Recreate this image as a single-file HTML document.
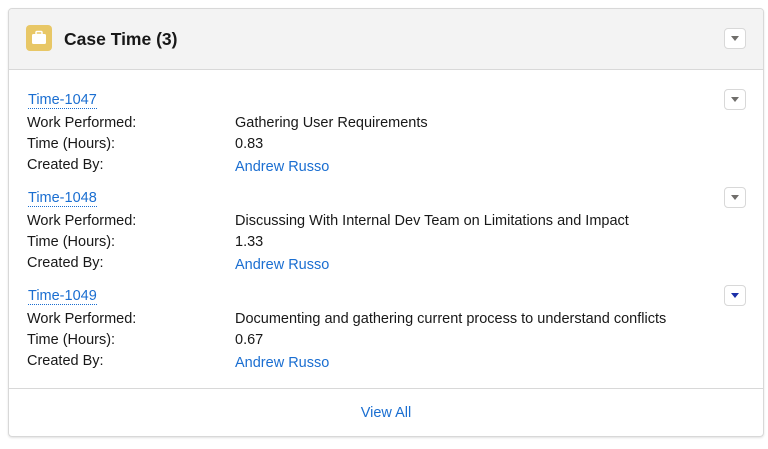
<!DOCTYPE html>
<html><head><style>
*{margin:0;padding:0;box-sizing:border-box}
body{width:768px;height:449px;background:#fff;font-family:"Liberation Sans",sans-serif;position:relative;overflow:hidden}
.card{position:absolute;left:8px;top:8px;width:756px;height:429px;border:1px solid #d8d8d8;border-radius:4px;box-shadow:0 1px 2px rgba(0,0,0,.12);overflow:hidden}
.hdr{position:absolute;left:0;top:0;width:100%;height:61px;background:#f3f3f3;border-bottom:1px solid #d8d8d8}
.icon{position:absolute;left:17px;top:16px;width:26px;height:26px;background:#e8c766;border-radius:4px}
.title{position:absolute;left:55px;top:20px;font-size:17.5px;font-weight:bold;color:#181818}
.btn{position:absolute;width:22px;height:21px;border:1px solid #d8d8d8;border-radius:4px;background:#fff}
.btn:after{content:"";position:absolute;left:6px;top:7px;border-left:4.5px solid transparent;border-right:4.5px solid transparent;border-top:5px solid #706e6b}
.btn.blue:after{border-top-color:#1b2fa8}
.t{position:absolute;font-size:14.5px;color:#181818}
.lnk{position:absolute;left:19px;font-size:14.5px;color:#1a6ed1;border-bottom:1px dotted #1a6ed1;line-height:16px}
.foot{position:absolute;left:0;top:379px;width:100%;border-top:1px solid #d8d8d8;height:50px}
</style></head><body>
<div class="card">
<div class="hdr"><div class="icon"><svg width="26" height="26"><rect x="6" y="9" width="14" height="10" rx="1.5" fill="#fff"/><rect x="10" y="6.5" width="6" height="3" rx="1" fill="none" stroke="#fff" stroke-width="1.5"/></svg></div><div class="title">Case Time (3)</div>
<div class="btn" style="left:715px;top:19px"></div></div>

<div class="lnk" style="top:83px">Time-1047</div>
<div class="btn" style="left:715px;top:80px"></div>
<div class="t" style="left:18px;top:106px">Work Performed:</div><div class="t" style="left:226px;top:106px">Gathering User Requirements</div>
<div class="t" style="left:18px;top:127px">Time (Hours):</div><div class="t" style="left:226px;top:127px">0.83</div>
<div class="t" style="left:18px;top:148px">Created By:</div><div class="t" style="left:226px;top:150px;color:#1a6ed1">Andrew Russo</div>

<div class="lnk" style="top:181px">Time-1048</div>
<div class="btn" style="left:715px;top:178px"></div>
<div class="t" style="left:18px;top:204px">Work Performed:</div><div class="t" style="left:226px;top:204px">Discussing With Internal Dev Team on Limitations and Impact</div>
<div class="t" style="left:18px;top:225px">Time (Hours):</div><div class="t" style="left:226px;top:225px">1.33</div>
<div class="t" style="left:18px;top:246px">Created By:</div><div class="t" style="left:226px;top:248px;color:#1a6ed1">Andrew Russo</div>

<div class="lnk" style="top:279px">Time-1049</div>
<div class="btn blue" style="left:715px;top:276px"></div>
<div class="t" style="left:18px;top:302px">Work Performed:</div><div class="t" style="left:226px;top:302px">Documenting and gathering current process to understand conflicts</div>
<div class="t" style="left:18px;top:323px">Time (Hours):</div><div class="t" style="left:226px;top:323px">0.67</div>
<div class="t" style="left:18px;top:344px">Created By:</div><div class="t" style="left:226px;top:346px;color:#1a6ed1">Andrew Russo</div>

<div class="foot"><div style="position:absolute;left:0;width:100%;top:16px;text-align:center;font-size:14.5px;color:#1a6ed1">View All</div></div>
</div>
</body></html>
